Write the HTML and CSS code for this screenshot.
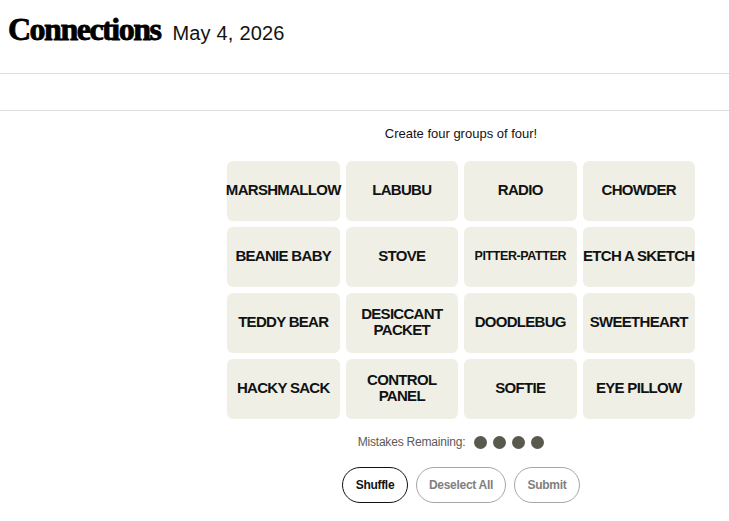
FILE: index.html
```
<!DOCTYPE html>
<html lang="en">
<head>
<meta charset="utf-8">
<title>Connections</title>
<link rel="stylesheet" href="styles.css">
</head>
<body>
<header class="top">
  <h1 class="title">Connections</h1>
  <span class="date">May 4, 2026</span>
</header>
<div class="toolbar"></div>
<div class="layout">
  <aside class="side"></aside>
  <main class="game">
    <p class="prompt">Create four groups of four!</p>
    <div class="board">
      <div class="tile">MARSHMALLOW</div>
      <div class="tile">LABUBU</div>
      <div class="tile">RADIO</div>
      <div class="tile">CHOWDER</div>
      <div class="tile">BEANIE BABY</div>
      <div class="tile">STOVE</div>
      <div class="tile small">PITTER-PATTER</div>
      <div class="tile">ETCH A SKETCH</div>
      <div class="tile">TEDDY BEAR</div>
      <div class="tile">DESICCANT<br>PACKET</div>
      <div class="tile">DOODLEBUG</div>
      <div class="tile">SWEETHEART</div>
      <div class="tile">HACKY SACK</div>
      <div class="tile">CONTROL<br>PANEL</div>
      <div class="tile">SOFTIE</div>
      <div class="tile">EYE PILLOW</div>
    </div>
    <div class="mistakes">
      <span class="mistakes-label">Mistakes Remaining:</span>
      <span class="dots"><i class="dot"></i><i class="dot"></i><i class="dot"></i><i class="dot"></i></span>
    </div>
    <div class="actions">
      <button class="btn active w66">Shuffle</button>
      <button class="btn w90">Deselect All</button>
      <button class="btn w66">Submit</button>
    </div>
  </main>
</div>
</body>
</html>
```
FILE: styles.css
```
* { box-sizing: border-box; }
html, body { margin: 0; padding: 0; background: #fff; }
body { font-family: "Liberation Sans", Arial, sans-serif; color: #121212; }

.top {
  height: 74px;
  border-bottom: 1px solid #dcdcdc;
  display: flex;
  align-items: baseline;
  padding: 11px 0 0 8px;
  gap: 12px;
}
.title {
  margin: 0;
  font-family: "Liberation Serif", "Times New Roman", serif;
  font-weight: 700;
  font-size: 32px;
  line-height: 36px;
  letter-spacing: -1.5px;
  -webkit-text-stroke: 0.8px #000;
  color: #000;
}
.date {
  font-size: 20px;
  line-height: 36px;
  letter-spacing: 0.2px;
  color: #121212;
}

.toolbar {
  height: 37px;
  border-bottom: 1px solid #dcdcdc;
}

.layout { display: flex; }
.side { width: 193px; flex: none; }
.game {
  flex: 1;
  display: flex;
  flex-direction: column;
  align-items: center;
  padding-top: 15px;
}
.prompt {
  margin: 0 0 19px;
  font-size: 13px;
  line-height: 16px;
  color: #121212;
}
.board {
  display: grid;
  grid-template-columns: repeat(4, 112.5px);
  grid-auto-rows: 60px;
  gap: 6px;
}
.tile {
  background: #efefe6;
  border-radius: 6px;
  display: flex;
  align-items: center;
  justify-content: center;
  text-align: center;
  font-weight: 700;
  font-size: 15px;
  line-height: 16px;
  letter-spacing: -0.7px;
  padding-bottom: 2px;
  color: #121212;
  white-space: nowrap;
}
.tile.small { font-size: 12.5px; letter-spacing: -0.4px; }

.mistakes {
  margin-top: 15px;
  height: 16px;
  display: flex;
  align-items: center;
  gap: 9px;
  margin-left: -20px;
}
.mistakes-label { font-size: 12px; color: #5a5a5a; letter-spacing: -0.2px; }
.dots { display: flex; gap: 6px; }
.dot { width: 13px; height: 13px; border-radius: 50%; background: #5a594e; display: block; }

.actions {
  margin-top: 17px;
  display: flex;
  gap: 8px;
}
.btn {
  height: 36px;
  border-radius: 18px;
  border: 1px solid #a6a6a6;
  background: #fff;
  color: #7f7f7f;
  font-family: "Liberation Sans", Arial, sans-serif;
  font-weight: 700;
  font-size: 12px;
  letter-spacing: -0.3px;
  padding: 0;
}
.btn.active { border-color: #121212; color: #121212; }
.w66 { width: 66px; }
.w90 { width: 90px; }
```
